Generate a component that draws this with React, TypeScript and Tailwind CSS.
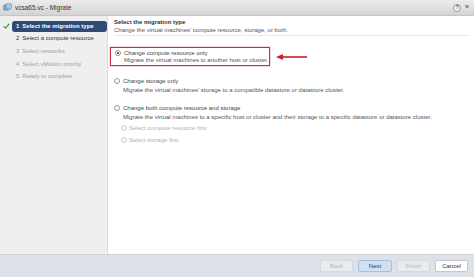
import React from 'react';

const steps = [
    { n: 1, label: 'Select the migration type', state: 'active' },
    { n: 2, label: 'Select a compute resource', state: 'next' },
    { n: 3, label: 'Select networks', state: 'off' },
    { n: 4, label: 'Select vMotion priority', state: 'off' },
    { n: 5, label: 'Ready to complete', state: 'off' },
];

const Radio: React.FC<{ checked?: boolean; disabled?: boolean }> = ({ checked, disabled }) => (
    <span
        className={`flex h-[6px] w-[6px] shrink-0 items-center justify-center rounded-full border ${
            disabled ? 'border-[#d2d2d2] bg-[#f8f8f8]' : 'border-[#9a9a9a] bg-white'
        }`}
    >
        {checked && <span className="h-[2.5px] w-[2.5px] rounded-full bg-[#333]" />}
    </span>
);

const Option: React.FC<{ title: string; desc: string; checked?: boolean; lead?: string }> = ({ title, desc, checked, lead = 'leading-[9px]' }) => (
    <div className="flex whitespace-nowrap">
        <div className={`flex w-[12px] shrink-0 items-center justify-center ${lead === 'leading-[7px]' ? 'h-[7px]' : 'h-[9px]'}`}>
            <Radio checked={checked} />
        </div>
        <div className={lead}>
            <div className="text-[#444]">{title}</div>
            <div className="text-[#555]">{desc}</div>
        </div>
    </div>
);

export default function App() {
    return (
        <div className="flex h-[277px] w-[474px] flex-col bg-white text-[6px]" style={{ fontFamily: '"Liberation Sans", Arial, sans-serif' }}>
            {/* title bar */}
            <div className="flex h-[16px] shrink-0 items-center border-b border-[#c4c4c4] bg-gradient-to-b from-[#ececec] to-[#d4d4d4] px-[3px]">
                <svg width="9" height="9" viewBox="0 0 10 10" className="mr-[3px]">
                    <rect x="0.5" y="2" width="6" height="6" rx="1" fill="#7da7cf" stroke="#5a83ad" strokeWidth="0.6" />
                    <rect x="3.5" y="0.8" width="6" height="6" rx="1" fill="#a9c8e6" stroke="#5a83ad" strokeWidth="0.6" />
                </svg>
                <span className="text-[6.5px] text-[#333]">vcsa65.vc - Migrate</span>
                <div className="ml-auto flex items-center gap-[4px] pr-[2px]">
                    <span className="flex h-[8px] w-[8px] items-center justify-center rounded-full border border-[#999] bg-[#f4f4f4] text-[5.5px] font-bold text-[#555]">?</span>
                    <span className="text-[7px] font-bold text-[#666]">»</span>
                </div>
            </div>

            <div className="flex min-h-0 flex-1">
                {/* sidebar */}
                <div className="w-[108px] shrink-0 border-r border-[#dcdcdc] bg-[#efefef] pt-[4px]">
                    {steps.map((s) => (
                        <div key={s.n} className="flex h-[12.6px] items-center">
                            <span className="flex w-[12px] justify-center">
                                {s.state === 'active' && (
                                    <svg width="7" height="6" viewBox="0 0 7 6">
                                        <path d="M0.7 3.2 L2.6 5 L6.3 0.8" fill="none" stroke="#5aa04a" strokeWidth="1.3" />
                                    </svg>
                                )}
                            </span>
                            <div
                                className={`flex h-[11.5px] flex-1 items-center rounded-[3px] pl-[4px] ${
                                    s.state === 'active' ? 'bg-[#2d4b76] font-bold text-white' : ''
                                } ${s.state === 'next' ? 'text-[#333]' : ''} ${s.state === 'off' ? 'text-[#a0a0a0]' : ''}`}
                            >
                                <span className="mr-[3px]">{s.n}</span>
                                {s.label}
                            </div>
                        </div>
                    ))}
                </div>

                {/* content */}
                <div className="flex-1 pl-[6px] pr-[4px] pt-[2px]">
                    <div className="border-b border-[#e8e8e8] pb-[1px] leading-[8px]">
                        <div className="font-bold text-[#333]">Select the migration type</div>
                        <div className="text-[#555]">Change the virtual machines' compute resource, storage, or both.</div>
                    </div>

                    <div className="ml-[-4px] mt-[11px] flex items-center">
                        <div className="w-[160px] border border-[#c9303a] py-[1.5px] pl-[1px] shadow-[0_0_0_0.5px_#eab0b4]">
                            <Option checked lead="leading-[7px]" title="Change compute resource only" desc="Migrate the virtual machines to another host or cluster." />
                        </div>
                        <svg width="32" height="6" viewBox="0 0 32 6" className="ml-[6px]">
                            <path d="M6 3 H31" stroke="#c9202a" strokeWidth="1.6" />
                            <path d="M0 3 L7 0 L7 6 Z" fill="#c9202a" />
                        </svg>
                    </div>

                    <div className="ml-[-3px] mt-[10.5px]">
                        <Option title="Change storage only" desc="Migrate the virtual machines' storage to a compatible datastore or datastore cluster." />
                    </div>

                    <div className="ml-[-3px] mt-[9px]">
                        <Option
                            title="Change both compute resource and storage"
                            desc="Migrate the virtual machines to a specific host or cluster and their storage to a specific datastore or datastore cluster."
                        />
                        <div className="mt-[2px] flex flex-col gap-[3px] pl-[8px] leading-[9px] text-[#b0b0b0]">
                            <div className="flex items-center">
                                <span className="flex w-[10px] justify-center"><Radio disabled /></span>
                                <span>Select compute resource first</span>
                            </div>
                            <div className="flex items-center">
                                <span className="flex w-[10px] justify-center"><Radio disabled /></span>
                                <span>Select storage first</span>
                            </div>
                        </div>
                    </div>
                </div>
            </div>

            {/* footer */}
            <div className="flex h-[23px] shrink-0 items-center justify-end gap-[5px] border-t border-[#cfd4dc] bg-[#dde1e8] pr-[6px]">
                <button className="h-[12px] w-[33px] rounded-[2px] border border-[#d6d9de] bg-[#e9ebee] text-[6px] text-[#b8b8b8]">Back</button>
                <button className="h-[12px] w-[34px] rounded-[2px] border border-[#a9bfdc] bg-[#cfe0f5] text-[6px] text-[#2a3c57]">Next</button>
                <button className="h-[12px] w-[33px] rounded-[2px] border border-[#d6d9de] bg-[#e9ebee] text-[6px] text-[#b8b8b8]">Finish</button>
                <button className="h-[12px] w-[33px] rounded-[2px] border border-[#c4c8ce] bg-white text-[6px] text-[#333]">Cancel</button>
            </div>
        </div>
    );
}
